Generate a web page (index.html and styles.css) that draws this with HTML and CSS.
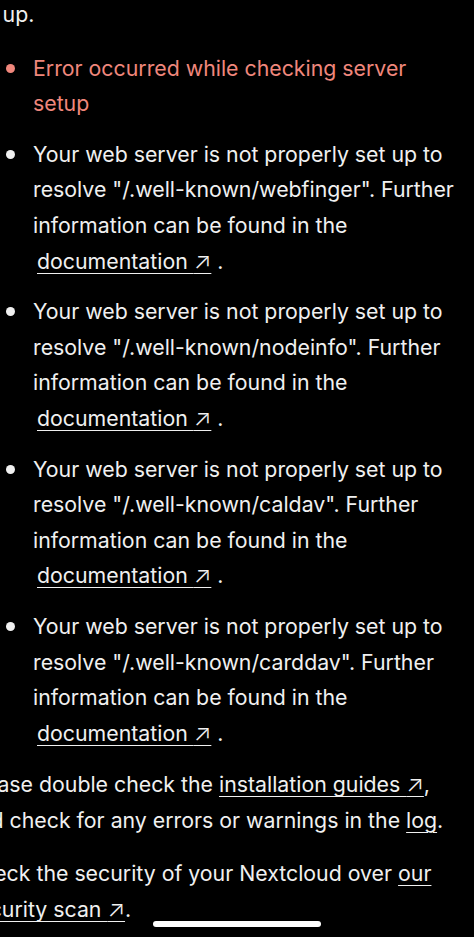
FILE: index.html
```html
<!DOCTYPE html>
<html lang="en">
<head>
  <meta charset="UTF-8" />
  <meta name="viewport" content="width=device-width, initial-scale=1.0" />
  <title>Setup warnings</title>
  <link rel="stylesheet" href="styles.css">
</head>
<body>
  <div class="page">
    <p class="intro">set up.</p>

    <ul class="checks">
      <li class="error">Error occurred while checking server setup</li>
      <li>Your web server is not properly set up to resolve "/.well-known/webfinger". Further information can be found in the <a class="doc" href="#">documentation <span class="arrow">↗</span></a> .</li>
      <li>Your web server is not properly set up to resolve "/.well-known/nodeinfo". Further information can be found in the <a class="doc" href="#">documentation <span class="arrow">↗</span></a> .</li>
      <li>Your web server is not properly set up to resolve "/.well-known/caldav". Further information can be found in the <a class="doc" href="#">documentation <span class="arrow">↗</span></a> .</li>
      <li>Your web server is not properly set up to resolve "/.well-known/carddav". Further information can be found in the <a class="doc" href="#">documentation <span class="arrow">↗</span></a> .</li>
    </ul>

    <p>Please double check the <a href="#">installation guides <span class="arrow">↗</span></a>, and check for any errors or warnings in the <a href="#">log</a>.</p>
    <p>Check the security of your Nextcloud over <a href="#">our security scan <span class="arrow">↗</span></a>.</p>
  </div>

  <div class="home-bar"></div>
</body>
</html>
```

FILE: styles.css
```css
body {
  margin: 0;
  background: #000;
  color: #f0f0f0;
  font-family: Inter, 'Noto Sans', sans-serif;
  font-size: 21.3px;
  line-height: 35.6px;
  overflow: hidden;
}

.page {
  width: 494px;
  margin-left: -34px;
}

.page p {
  margin: 0 0 18px;
}

.page .intro {
  margin-top: -3px;
  margin-bottom: 18px;
}

.page a {
  color: inherit;
  text-decoration: underline;
  text-decoration-thickness: 1px;
  text-underline-offset: 4px;
}

.page a.doc {
  margin-left: 4px;
}

.arrow {
  font-size: 23px;
  line-height: 0;
  font-weight: 300;
}

.checks {
  list-style: none;
  margin: 0 0 16px;
  padding-left: 67px;
}

.checks li {
  position: relative;
  margin-bottom: 15px;
}

.checks li:last-child {
  margin-bottom: 0;
}

/* round bullet, a bit bigger than the default disc */
.checks li::before {
  content: "";
  position: absolute;
  left: -27px;
  top: 13px;
  width: 9px;
  height: 9px;
  border-radius: 50%;
  background: currentColor;
}

.checks .error {
  color: #f0877c;
}

.home-bar {
  position: fixed;
  left: 153px;
  bottom: 10px;
  width: 168px;
  height: 6px;
  border-radius: 3px;
  background: #fff;
}
```
